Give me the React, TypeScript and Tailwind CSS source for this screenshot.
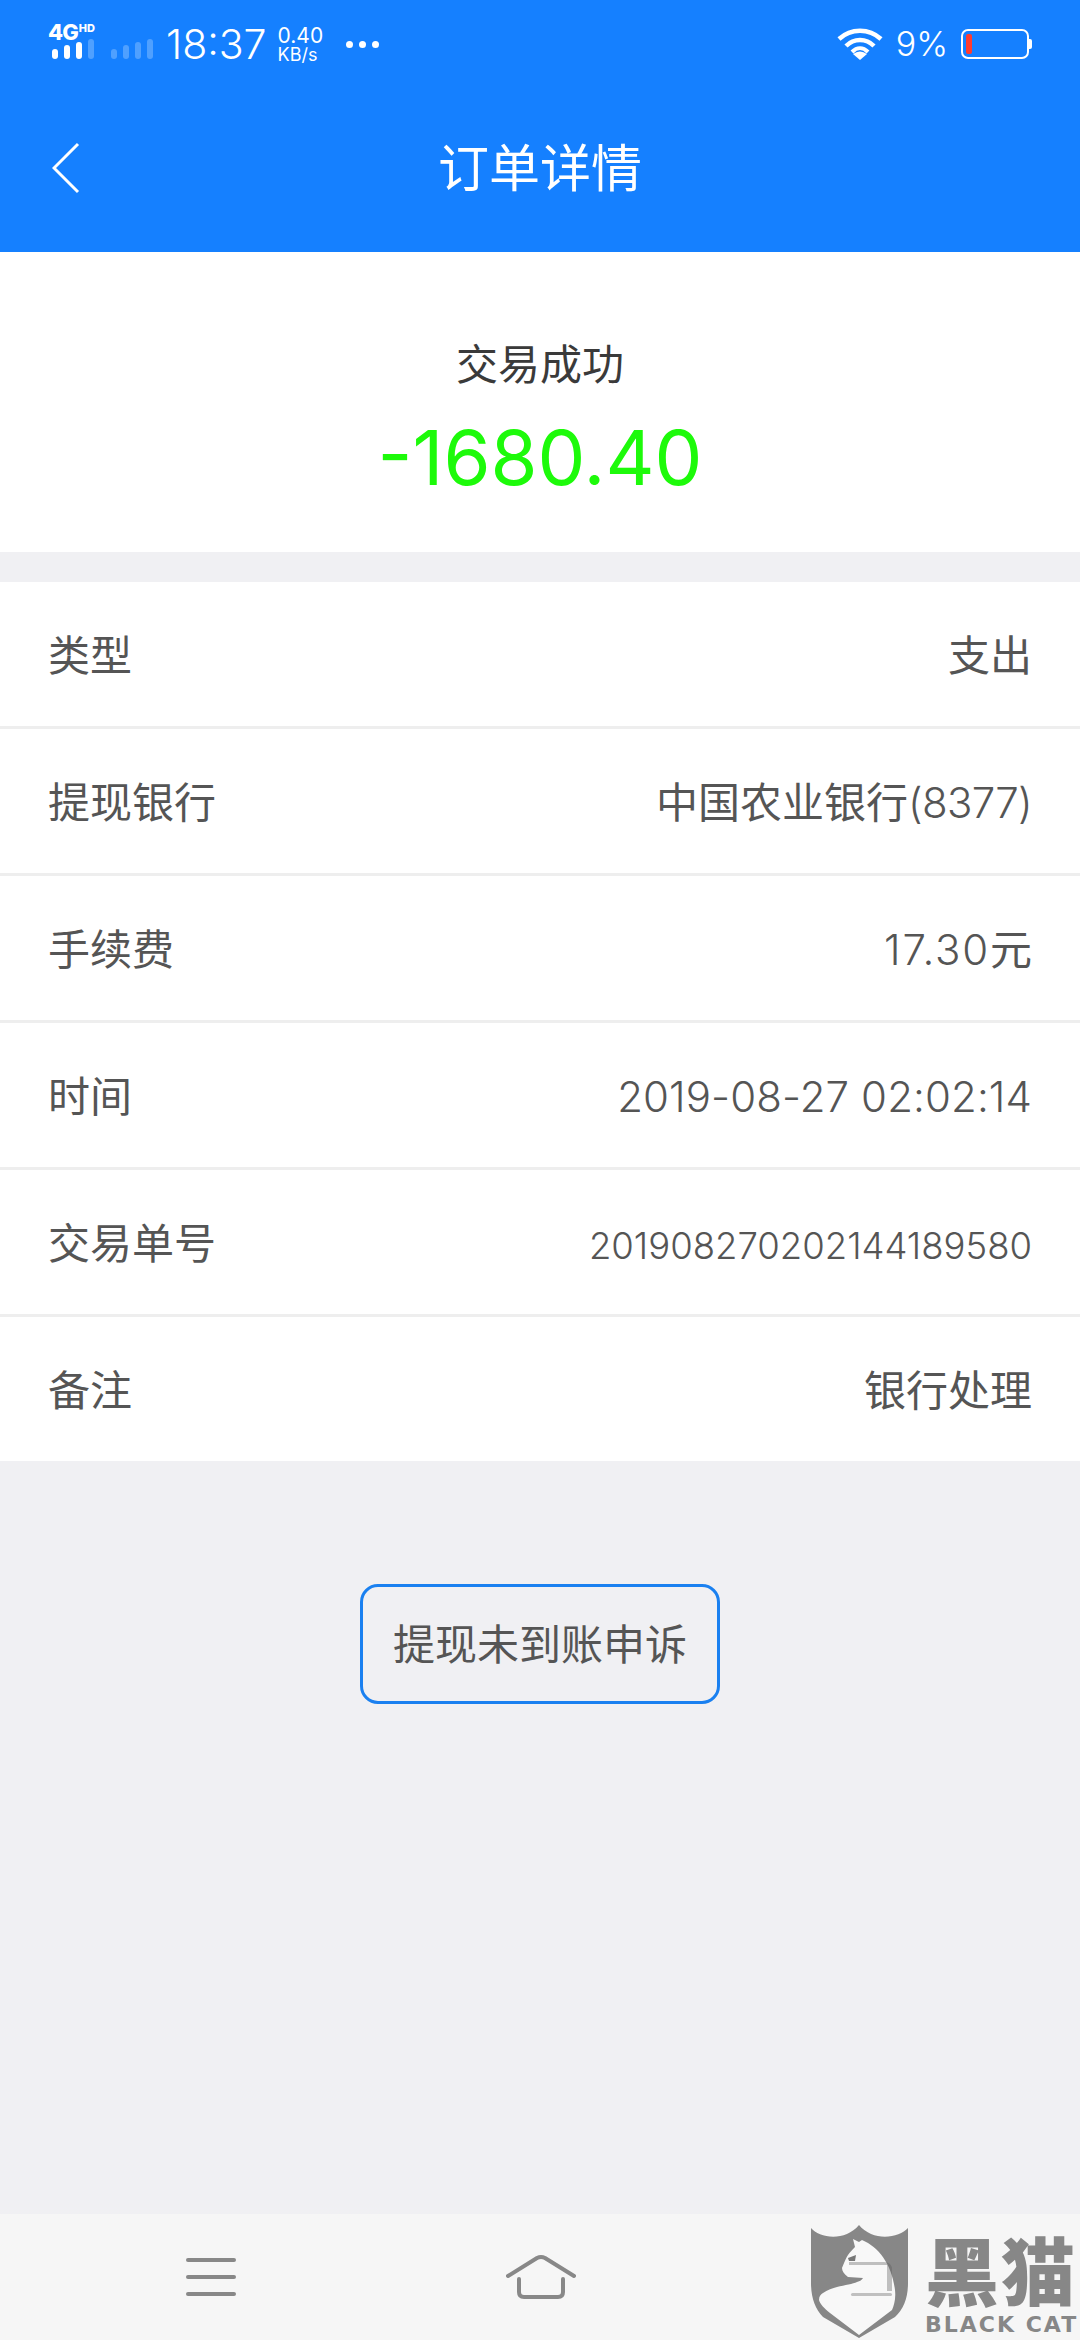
import React from 'react';

const rows: { label: string; value: React.ReactNode }[] = [
  { label: '类型', value: '支出' },
  { label: '提现银行', value: <>中国农业银行<span className="font-light tracking-[-0.7px]">(8377)</span></> },
  { label: '手续费', value: <><span className="font-light tracking-[1.8px]">17.30</span>元</> },
  { label: '时间', value: <span className="font-light tracking-[0.1px]">2019-08-27 02:02:14</span> },
  { label: '交易单号', value: <span className="text-[36.5px] font-light">201908270202144189580</span> },
  { label: '备注', value: '银行处理' },
];

function SignalBars({ on }: { on: number }) {
  const heights = [10, 14, 17, 20];
  return (
    <div className="flex items-end gap-[6px]">
      {heights.map((h, i) => (
        <div
          key={i}
          className={`w-[6px] rounded-[3px] ${i < on ? 'bg-white' : 'bg-white/25'}`}
          style={{ height: h }}
        />
      ))}
    </div>
  );
}

function StatusBar() {
  return (
    <div className="flex h-[84px] items-center justify-between pl-[48px] pr-[48px] pt-[4px] text-white">
      <div className="flex items-center">
        <div className="flex items-end mt-[-6px]">
          <div className="flex w-[46px] flex-col">
            <div className="flex h-[15px] items-start font-['Inter'] font-extrabold leading-none">
              <span className="text-[22px] leading-[16px] tracking-[-1px]">4G</span>
              <span className="ml-[1px] mt-[-1px] text-[11px] leading-[11px]">HD</span>
            </div>
            <div className="ml-[4px]">
              <SignalBars on={3} />
            </div>
          </div>
          <div className="ml-[17px]">
            <SignalBars on={0} />
          </div>
        </div>
        <span className="ml-[13px] font-['Inter'] text-[41px] font-light leading-none">18:37</span>
        <div className="ml-[11px] flex flex-col font-['Inter'] leading-none">
          <span className="text-[21px] leading-[19px]">0.40</span>
          <span className="mt-[1px] text-[18px] leading-[17px]">KB/s</span>
        </div>
        <div className="ml-[23px] flex gap-[6px]">
          <div className="h-[7px] w-[7px] rounded-full bg-white" />
          <div className="h-[7px] w-[7px] rounded-full bg-white" />
          <div className="h-[7px] w-[7px] rounded-full bg-white" />
        </div>
      </div>
      <div className="flex items-center">
        <svg width="46" height="32" viewBox="0 0 46 32" fill="none" stroke="white" strokeWidth="4.5">
          <path d="M2 11 C14 0 32 0 44 11" />
          <path d="M9 18 C17 10 29 10 37 18" />
          <path d="M15 24 C20 19 26 19 31 24" strokeWidth="4" />
          <path d="M16 26 Q23 21 30 26 L23 32 Z" fill="white" stroke="none" />
        </svg>
        <span className="ml-[13px] font-['Inter'] text-[34px] font-light leading-none">9%</span>
        <div className="ml-[13px] flex items-center">
          <div className="flex h-[30px] w-[68px] items-center rounded-[7px] border-2 border-white p-[3px]">
            <div className="h-full w-[6px] rounded-[2px] bg-[#ff3b30]" />
          </div>
          <div className="h-[10px] w-[3px] rounded-r-[2px] bg-white" />
        </div>
      </div>
    </div>
  );
}

function WatermarkLogo() {
  return (
    <div className="absolute left-[811px] top-[2225px] flex text-[#878787]">
      <svg width="98" height="114" viewBox="0 0 98 114" className="shrink-0">
        <path
          d="M0 3 C8 13 34 17 48 0 C62 17 88 13 97 3 L97 58 C97 72 93 84 84 92 L48 113 L12 92 C4 84 0 72 0 58 Z"
          fill="#878787"
        />
        <path
          d="M42 14 L48 17 L51 15 C68 22 81 40 84 65 C85 74 83 80 81 85 L48 110 L19 88 C13 83 9 79 8 75 C8 71 10 69 12 68 C16 65 22 63 26 62 C34 60 42 59 46 57 C49 56 51 55 52 53 L37 52 C33 49 31 46 31 43 C33 38 35 33 37 30 C39 27 42 24 44 22 Z"
          fill="#f8f8f8"
        />
        <path d="M37 33 L45 30 L44 36 L38 36 Z" fill="#777" />
        <path d="M38 37 H73 Q81 37 81 45 V66 H76 V40 H38 Z" fill="#555" opacity="0.35" />
        <rect x="40" y="68" width="41" height="3" rx="1.5" fill="#c0c0c0" />
      </svg>
      <div className="ml-[16px] flex w-[155px] flex-col">
        <span className="mt-[6px] whitespace-nowrap font-['Noto_Sans_CJK_SC',sans-serif] text-[74px] font-black leading-[74px] tracking-[2px]">黑猫</span>
        <span className="mt-[9px] whitespace-nowrap font-['DejaVu_Sans',sans-serif] text-[22px] font-bold leading-[22px] tracking-[2px]">BLACK CAT</span>
      </div>
    </div>
  );
}

export default function App() {
  return (
    <div className="relative flex h-[2340px] w-[1080px] flex-col overflow-hidden bg-[#f0f0f3] font-['Inter','Noto_Sans_CJK_SC',sans-serif]">
      <header className="h-[252px] bg-[#1580ff]">
        <StatusBar />
        <div className="relative flex h-[168px] items-center justify-center">
          <svg
            width="28"
            height="52"
            viewBox="0 0 28 52"
            fill="none"
            stroke="#fff"
            strokeWidth="3"
            className="absolute left-[52px] top-[58px]"
          >
            <path d="M26 2 L2 26 L26 50" />
          </svg>
          <h1 className="text-[51px] font-normal leading-none text-white">订单详情</h1>
        </div>
      </header>

      <section className="flex h-[300px] flex-col items-center bg-white">
        <p className="mt-[89px] text-[42px] leading-[48px] text-[#3a3a3a]">交易成功</p>
        <p className="mt-[23px] text-[76px] font-normal leading-[90px] text-[#1dfa0a]">-1680.40</p>
      </section>

      <div className="mt-[30px] flex flex-col bg-white">
        {rows.map((row, i) => (
          <div
            key={row.label}
            className={`box-content flex h-[144px] items-center justify-between pl-[48px] pr-[48px] text-[#555] ${
              i < rows.length - 1 ? 'border-b-[3px] border-[#eeeeee]' : ''
            }`}
          >
            <span className="mt-[4px] text-[42px] leading-none">{row.label}</span>
            <span className="mt-[4px] text-[42px] font-normal leading-none">{row.value}</span>
          </div>
        ))}
      </div>

      <div className="flex flex-1 flex-col items-center pt-[123px]">
        <button className="h-[120px] w-[360px] rounded-[18px] border-[3px] border-[#1a80f0] text-[42px] text-[#555]">
          提现未到账申诉
        </button>
      </div>

      <nav className="relative flex h-[126px] items-center bg-[#f6f6f6]">
        <div className="ml-[186px] flex w-[50px] flex-col gap-[13px]">
          <div className="h-[4px] rounded-full bg-[#888]" />
          <div className="h-[4px] rounded-full bg-[#888]" />
          <div className="h-[4px] rounded-full bg-[#888]" />
        </div>
        <svg
          width="70"
          height="46"
          viewBox="0 0 70 46"
          fill="none"
          stroke="#888"
          strokeWidth="4"
          strokeLinecap="round"
          strokeLinejoin="round"
          className="ml-[270px]"
        >
          <path d="M2 22 L31 4 Q35 2 39 4 L68 22" />
          <path d="M13 25 V38 Q13 43 18 43 H52 Q57 43 57 38 V25" />
        </svg>
      </nav>

      <WatermarkLogo />
    </div>
  );
}
